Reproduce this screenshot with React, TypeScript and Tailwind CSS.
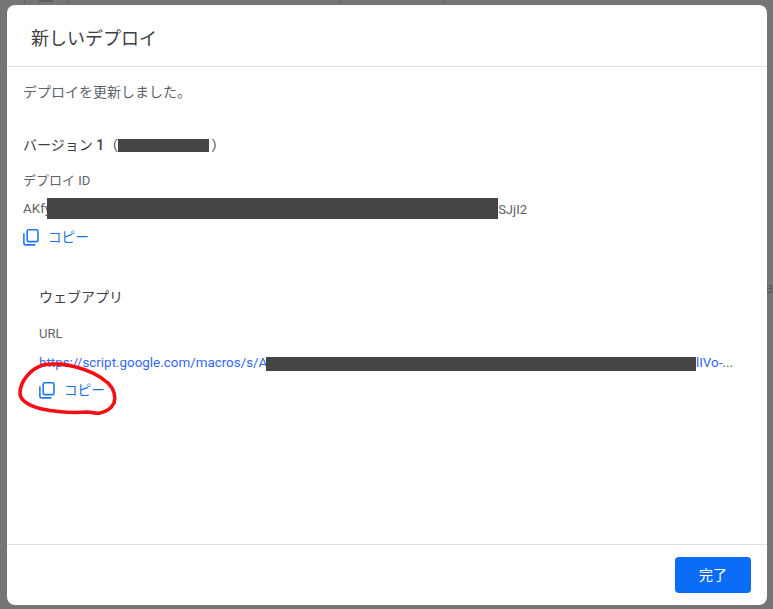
const font = { fontFamily: '"Roboto", "Noto Sans CJK JP", "Noto Sans", sans-serif' };

function CopyIcon() {
  return (
    <svg width="16" height="17" viewBox="0 0 16 17" fill="none" stroke="#2277ee" strokeWidth="1.6">
      <rect x="4.2" y="0.8" width="10.8" height="11.8" rx="1.4" />
      <path d="M0.9 4.2V14c0 1 .8 1.9 1.9 1.9h9.6" />
    </svg>
  );
}

function CopyRow() {
  return (
    <div className="flex items-center h-[20px] gap-[9px] text-[13.6px] text-[#1a73e8]">
      <CopyIcon />
      <span>コピー</span>
    </div>
  );
}

export default function App() {
  return (
    <div style={font} className="relative w-[773px] h-[609px] overflow-hidden bg-[#747577]">
      <div className="h-[5px] flex">
        <div className="w-[25px] border-r border-[#666769]" />
        <div className="w-[43px] border-r border-[#666769] flex justify-center">
          <div className="w-[14px] h-[2px] bg-[#5e5f61]" />
        </div>
        <div className="w-[272px] border-r border-[#666769]" />
        <div className="w-[105px] border-r border-[#666769]" />
      </div>
      <div className="absolute right-0 top-[284px] text-[8px] leading-[12px] text-[#444444]">日</div>
      <div className="relative ml-[7px] w-[760px] h-[600px] flex flex-col bg-white rounded-[8px]">
        <div className="h-[62px] shrink-0 flex items-center pt-[5px] pl-[24px] border-b border-[#e0e0e0] text-[18px] text-[#3c4043]">
          新しいデプロイ
        </div>
        <div className="flex-1 min-h-0 pl-[16px] pr-[32px] pt-[15px]">
          <div className="text-[14px] leading-[20px] text-[#5f6368]">デプロイを更新しました。</div>
          <div className="mt-[33px] flex items-center h-[20px] text-[14px] text-[#3c4043] whitespace-pre">
            <span>バージョン <span className="font-medium">1</span>（</span>
            <span className="w-[91px] h-[13px] bg-[#444444]" />
            <span className="ml-[2px]">）</span>
          </div>
          <div className="mt-[18px] text-[13px] leading-[16px] text-[#5f6368]">デプロイ ID</div>
          <div className="mt-[9px] flex items-center h-[21px] text-[13.4px] text-[#5f6368]">
            <span className="mt-[2px]">AKfy</span>
            <span className="w-[451px] h-[21px] bg-[#444444] -ml-[4px]" />
            <span className="mt-[2px] text-[13px]">SJjI2</span>
          </div>
          <div className="mt-[8px]">
            <CopyRow />
          </div>
          <div className="mt-[40px] pl-[16px]">
            <div className="text-[14px] leading-[20px] text-[#3c4043]">ウェブアプリ</div>
            <div className="mt-[19px] text-[13px] leading-[16px] text-[#5f6368]">URL</div>
            <div className="mt-[11px] w-[694px] flex items-center h-[20px] text-[13.4px] text-[#3367f6] whitespace-nowrap">
              <span>https://script.google.com/macros/s/A</span>
              <span className="w-[430px] h-[14px] mt-[2px] -ml-[1px] bg-[#444444]" />
              <span>lIVo-</span>
              <span className="text-[#5f6368]">...</span>
            </div>
            <div className="mt-[7px]">
              <CopyRow />
            </div>
          </div>
        </div>
        <div className="h-[61px] shrink-0 flex items-center justify-end pr-[16px] border-t border-[#e0e0e0]">
          <button className="w-[76px] h-[36px] rounded-[4px] bg-[#0b6cf5] text-white text-[14px]">完了</button>
        </div>
      </div>
      <svg className="absolute left-0 top-0 pointer-events-none" width="773" height="609" fill="none">
        <path
          d="M43 365C52 363 66 364 76 367C88 370 100 376 108 383C114 389 116 396 114 403C111 409 105 412 100 413C96 414 92 412 88 412C74 413 56 412 42 409C30 406 20 401 20 393C20 382 30 369 43 365Z"
          stroke="#f40f15"
          strokeWidth="3.6"
          strokeLinecap="round"
        />
      </svg>
    </div>
  );
}
